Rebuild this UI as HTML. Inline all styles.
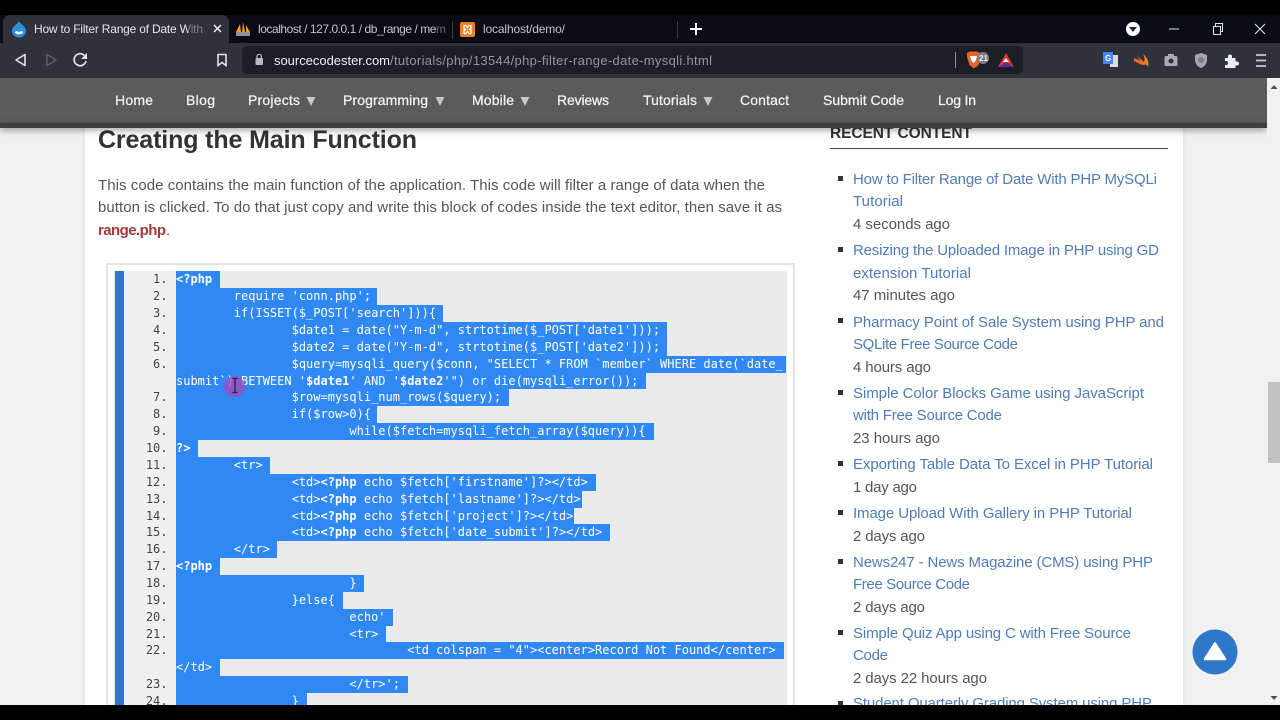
<!DOCTYPE html>
<html><head><meta charset="utf-8"><title>How to Filter Range of Date</title>
<style>
html,body{margin:0;padding:0;width:1280px;height:720px;overflow:hidden;background:#f1f1f1}
body{position:relative}
.l{position:absolute}
svg{position:absolute;left:0;top:0}
svg text{font-family:"Liberation Sans",sans-serif}
.r{position:absolute;left:176px;background:#3088f4;color:#fff;font:12px/17px "DejaVu Sans Mono","Liberation Mono",monospace;white-space:pre;tab-size:8}
.r b{font-weight:bold}
.n{position:absolute;left:124px;width:43.5px;text-align:right;color:#444;font:12px/17px "DejaVu Sans Mono","Liberation Mono",monospace}
.a{fill:#4f7cb6;font-size:15px}
.t{fill:#555;font-size:15px}
.m{fill:#f2f2f2;font-size:14px;stroke:#f2f2f2;stroke-width:.25}
</style></head>
<body>
<div class="l" style="left:85px;top:78px;width:1098px;height:642px;background:#fff;box-shadow:0 0 6px rgba(0,0,0,.08)"></div>
<svg width="1280" height="720" style="z-index:1">
<text x="98" y="148" font-size="25" font-weight="bold" fill="#333" textLength="319">Creating the Main Function</text>
<text x="98" y="190" class="t" textLength="667">This code contains the main function of the application. This code will filter a range of data when the</text>
<text x="98" y="212" class="t" textLength="684">button is clicked. To do that just copy and write this block of codes inside the text editor, then save it as</text>
<text x="98" y="235" font-size="15" font-weight="bold" fill="#a33a3a" textLength="68">range.php</text>
<text x="166" y="235" class="t">.</text>
<text x="830" y="138" font-size="15.5" font-weight="bold" fill="#333" textLength="142">RECENT CONTENT</text>
<rect x="830" y="148" width="338" height="1" fill="#444"/>
<g fill="#333">
<rect x="838" y="176" width="5" height="5"/><rect x="838" y="247" width="5" height="5"/><rect x="838" y="318" width="5" height="5"/><rect x="838" y="390" width="5" height="5"/><rect x="838" y="461" width="5" height="5"/><rect x="838" y="510" width="5" height="5"/><rect x="838" y="559" width="5" height="5"/><rect x="838" y="630" width="5" height="5"/><rect x="838" y="701" width="5" height="4"/>
</g>
<text x="853" y="184" class="a" textLength="304">How to Filter Range of Date With PHP MySQLi</text>
<text x="853" y="206" class="a" textLength="50">Tutorial</text>
<text x="853" y="229" class="t" textLength="97">4 seconds ago</text>
<text x="853" y="255" class="a" textLength="306">Resizing the Uploaded Image in PHP using GD</text>
<text x="853" y="278" class="a" textLength="118">extension Tutorial</text>
<text x="853" y="300" class="t" textLength="102">47 minutes ago</text>
<text x="853" y="327" class="a" textLength="311">Pharmacy Point of Sale System using PHP and</text>
<text x="853" y="349" class="a" textLength="165">SQLite Free Source Code</text>
<text x="853" y="372" class="t" textLength="78">4 hours ago</text>
<text x="853" y="398" class="a" textLength="291">Simple Color Blocks Game using JavaScript</text>
<text x="853" y="420" class="a" textLength="149">with Free Source Code</text>
<text x="853" y="443" class="t" textLength="87">23 hours ago</text>
<text x="853" y="469" class="a" textLength="300">Exporting Table Data To Excel in PHP Tutorial</text>
<text x="853" y="492" class="t" textLength="64">1 day ago</text>
<text x="853" y="518" class="a" textLength="279">Image Upload With Gallery in PHP Tutorial</text>
<text x="853" y="541" class="t" textLength="72">2 days ago</text>
<text x="853" y="567" class="a" textLength="300">News247 - News Magazine (CMS) using PHP</text>
<text x="853" y="589" class="a" textLength="117">Free Source Code</text>
<text x="853" y="612" class="t" textLength="72">2 days ago</text>
<text x="853" y="638" class="a" textLength="278">Simple Quiz App using C with Free Source</text>
<text x="853" y="660" class="a" textLength="35">Code</text>
<text x="853" y="683" class="t" textLength="134">2 days 22 hours ago</text>
<text x="853" y="708" class="a" textLength="299">Student Quarterly Grading System using PHP</text>
</svg>

<div style="position:absolute;left:0;top:0;z-index:2">
<div class="l" style="left:106px;top:263px;width:685px;height:442px;border:2px solid #e4e4e4;border-bottom:0;background:#fff"></div>
<div class="l" style="left:114px;top:271px;width:673px;height:434px;background:#ebebeb"></div>
<div class="l" style="left:124px;top:271px;width:52px;height:434px;background:#f0f0f0"></div>
<div class="l" style="left:115px;top:271px;width:9px;height:434px;background:#2f78c9"></div>

<div class="n" style="top:271px">1.</div>
<div class="n" style="top:288px">2.</div>
<div class="n" style="top:305px">3.</div>
<div class="n" style="top:322px">4.</div>
<div class="n" style="top:339px">5.</div>
<div class="n" style="top:356px">6.</div>
<div class="n" style="top:389px">7.</div>
<div class="n" style="top:406px">8.</div>
<div class="n" style="top:423px">9.</div>
<div class="n" style="top:440px">10.</div>
<div class="n" style="top:457px">11.</div>
<div class="n" style="top:474px">12.</div>
<div class="n" style="top:491px">13.</div>
<div class="n" style="top:508px">14.</div>
<div class="n" style="top:524px">15.</div>
<div class="n" style="top:541px">16.</div>
<div class="n" style="top:558px">17.</div>
<div class="n" style="top:575px">18.</div>
<div class="n" style="top:592px">19.</div>
<div class="n" style="top:609px">20.</div>
<div class="n" style="top:626px">21.</div>
<div class="n" style="top:642px">22.</div>
<div class="n" style="top:676px">23.</div>
<div class="n" style="top:693px">24.</div>

<div class="r" style="top:271px;height:17px;width:43.5px"><b>&lt;?php</b></div>
<div class="r" style="top:288px;height:17px;width:200.5px">	require 'conn.php';</div>
<div class="r" style="top:305px;height:17px;width:266.5px">	if(ISSET($_POST['search'])){</div>
<div class="r" style="top:322px;height:17px;width:490.500px">		$date1 = date("Y-m-d", strtotime($_POST['date1']));</div>
<div class="r" style="top:339px;height:17px;width:490.500px">		$date2 = date("Y-m-d", strtotime($_POST['date2']));</div>
<div class="r" style="top:356px;height:17px;width:610px">		$query=mysqli_query($conn, "SELECT * FROM `member` WHERE date(`date_</div>
<div class="r" style="top:373px;height:16px;width:469.500px">submit`) BETWEEN '<b>$date1</b>' AND '<b>$date2</b>'") or die(mysqli_error());</div>
<div class="r" style="top:389px;height:17px;width:332.500px">		$row=mysqli_num_rows($query);</div>
<div class="r" style="top:406px;height:17px;width:200.500px">		if($row&gt;0){</div>
<div class="r" style="top:423px;height:17px;width:477.500px">			while($fetch=mysqli_fetch_array($query)){</div>
<div class="r" style="top:440px;height:17px;width:22px"><b>?&gt;</b></div>
<div class="r" style="top:457px;height:17px;width:94px">	&lt;tr&gt;</div>
<div class="r" style="top:474px;height:17px;width:419.500px">		&lt;td&gt;<b>&lt;?php</b> echo $fetch['firstname']?&gt;&lt;/td&gt;</div>
<div class="r" style="top:491px;height:17px;width:405.500px">		&lt;td&gt;<b>&lt;?php</b> echo $fetch['lastname']?&gt;&lt;/td&gt;</div>
<div class="r" style="top:508px;height:16px;width:397.500px">		&lt;td&gt;<b>&lt;?php</b> echo $fetch['project']?&gt;&lt;/td&gt;</div>
<div class="r" style="top:524px;height:17px;width:433.500px">		&lt;td&gt;<b>&lt;?php</b> echo $fetch['date_submit']?&gt;&lt;/td&gt;</div>
<div class="r" style="top:541px;height:17px;width:100.500px">	&lt;/tr&gt;</div>
<div class="r" style="top:558px;height:17px;width:43.500px"><b>&lt;?php</b></div>
<div class="r" style="top:575px;height:17px;width:188px">			}</div>
<div class="r" style="top:592px;height:17px;width:166.500px">		}else{</div>
<div class="r" style="top:609px;height:17px;width:216.500px">			echo'</div>
<div class="r" style="top:626px;height:16px;width:210px">			&lt;tr&gt;</div>
<div class="r" style="top:642px;height:17px;width:607.500px">				&lt;td colspan = "4"&gt;&lt;center&gt;Record Not Found&lt;/center&gt;</div>
<div class="r" style="top:659px;height:17px;width:43.500px">&lt;/td&gt;</div>
<div class="r" style="top:676px;height:17px;width:231.500px">			&lt;/tr&gt;';</div>
<div class="r" style="top:693px;height:17px;width:130.500px">		}</div>

<div class="l" style="left:224px;top:376px;width:21px;height:21px;border-radius:50%;background:rgba(170,70,190,.75)"></div>
<svg width="1280" height="720" style="pointer-events:none">
<path d="M232.500 378.500h5M235 378.500v14M232.500 392.500h5" stroke="#222" stroke-width="1.200" fill="none"/>
</svg>
</div>

<div style="position:absolute;left:0;top:0;z-index:3">
<div class="l" style="left:0;top:78px;width:1267px;height:45px;background:#5a5b5a"></div>
<div class="l" style="left:0;top:123px;width:1267px;height:5px;background:#3e3e3e;box-shadow:0 2px 7px rgba(0,0,0,.45)"></div>
<div class="l" style="left:1267px;top:78px;width:13px;height:642px;background:#f1f1f1"></div>
<div class="l" style="left:1268px;top:382px;width:12px;height:81px;background:#c1c1c1"></div>
<div class="l" style="left:0;top:0;width:1280px;height:15px;background:#000"></div>
<div class="l" style="left:0;top:15px;width:1280px;height:28px;background:#0a0b14"></div>
<div class="l" style="left:3px;top:15px;width:226px;height:28px;background:#2f323b;border-radius:7px 7px 0 0"></div>
<div class="l" style="left:0;top:43px;width:1280px;height:35px;background:#2f323b"></div>
<div class="l" style="left:242px;top:46px;width:781px;height:28px;background:#1c1e26;border-radius:5px"></div>
<div class="l" style="left:0;top:705px;width:1280px;height:15px;background:#000"></div>

<svg width="1280" height="720">
<defs><linearGradient id="sw" x1="1" y1="0" x2="0" y2="1"><stop offset="0" stop-color="#f4a62a"/><stop offset="1" stop-color="#e8482a"/></linearGradient></defs>
<!-- tab icons -->
<path d="M19 21c1 3 7 5 7 10a7 6.500 0 0 1-14 0c0-5 6-7 7-10z" fill="#2f8fd8"/>
<path d="M15 32c2-2 3 0 4 0s2-2 4 0c0 3-8 3-8 0z" fill="#fff"/>
<text x="34" y="33" font-size="12" fill="#e6e6e8" textLength="169">How to Filter Range of Date With</text>
<rect x="188" y="18" width="16" height="24" fill="#2f323b" opacity=".55"/>
<path d="M214 25l7 7M221 25l-7 7" stroke="#f0f0f0" stroke-width="1.500"/>
<path d="M236 32l4-8 1 8zM242 32l1-10 2 10zM246 32l0-7 4 7z" fill="#ee9a2c"/>
<rect x="236" y="32" width="14" height="4" fill="#8f92a0"/>
<text x="258" y="33" font-size="12" fill="#c4c5c9" textLength="188">localhost / 127.0.0.1 / db_range / mem</text>
<rect x="436" y="18" width="14" height="24" fill="#0a0b14" opacity=".5"/>
<rect x="452" y="21" width="1" height="18" fill="#3a3c44"/>
<rect x="460" y="22" width="15" height="15" rx="2" fill="#ef7f22"/>
<path d="M464 25.500h2l1.500 2 1.500-2h2v3l-1.500 1 1.500 1v3h-2l-1.500-2-1.500 2h-2v-3l1.500-1-1.500-1z" fill="none" stroke="#fff" stroke-width="1.300"/>
<text x="483" y="33" font-size="12" fill="#c4c5c9" textLength="82">localhost/demo/</text>
<rect x="677" y="21" width="1" height="18" fill="#3a3c44"/>
<path d="M696 23v12M690 29h12" stroke="#fff" stroke-width="2"/>
<circle cx="1133" cy="29" r="7" fill="#fff"/>
<path d="M1129 27h8l-4 5z" fill="#23252d"/>
<path d="M1169 29h10" stroke="#e6e6e6" stroke-width="1"/>
<rect x="1213.500" y="26.500" width="7" height="8" fill="none" stroke="#e6e6e6"/>
<path d="M1215.500 26v-2.500h7v8h-2" fill="none" stroke="#e6e6e6"/>
<path d="M1255 24l10 10M1265 24l-10 10" stroke="#e6e6e6" stroke-width="1"/>
<!-- toolbar -->
<path d="M25 54.500v11l-9-5.500z" fill="none" stroke="#e2e3e6" stroke-width="1.600" stroke-linejoin="round"/>
<path d="M47 54.500v11l9-5.500z" fill="none" stroke="#5b5e68" stroke-width="1.600" stroke-linejoin="round"/>
<path d="M85.500 57a6 6 0 1 0 .5 4" fill="none" stroke="#e2e3e6" stroke-width="1.700"/>
<path d="M87 53v6h-6z" fill="#e2e3e6"/>
<path d="M218 54.500h8v11l-4-3-4 3z" fill="none" stroke="#e2e3e6" stroke-width="1.600"/>
<rect x="255.500" y="58" width="7.500" height="7" rx="1" fill="#b8bac0"/>
<path d="M257 58v-1.500a2.200 2.200 0 0 1 4.400 0V58" fill="none" stroke="#b8bac0" stroke-width="1.200"/>
<text x="274" y="65" font-size="13" fill="#f0f0f2" textLength="116">sourcecodester.com</text>
<text x="390" y="65" font-size="13" fill="#92959e" textLength="322">/tutorials/php/13544/php-filter-range-date-mysqli.html</text>
<rect x="955" y="52" width="1" height="16" fill="#8c8e94"/>
<path d="M967 53l3-1.500h7l3 1.500 1 4-2.500 8-4.500 3.500-4.500-3.500-2.500-8z" fill="#e8622a"/>
<path d="M970 56h7l-1.500 5-2 2-2-2z" fill="#fff"/>
<circle cx="983" cy="58" r="6" fill="#7a7d85"/>
<text x="979" y="61" font-size="8" font-weight="bold" fill="#e8e8e8">21</text>
<path d="M1006 53l8 14h-16z" fill="#e0392f"/>
<path d="M1006 62l8 5h-16z" fill="#5c2d91"/>
<path d="M1006 58l3 4h-6z" fill="#fff"/>
<!-- extensions -->
<rect x="1110" y="55" width="8" height="12" fill="#d9dde2"/>
<rect x="1103" y="52" width="10" height="12" rx="1" fill="#4285f4"/>
<text x="1105" y="61" font-size="8" font-weight="bold" fill="#fff">G</text>
<path d="M1134 61C1138 63 1141 65 1143 65C1145 64 1147 65 1148 67C1149 63 1148 58 1143 54C1145 57 1145 60 1144 62C1142 60 1139 58 1137 56C1138 58 1140 60 1141 61C1139 60 1136 59 1134 58z" fill="url(#sw)"/>
<rect x="1164.500" y="56" width="13" height="10" rx="1.500" fill="#a9abb0"/>
<rect x="1168" y="54" width="6" height="3" fill="#a9abb0"/>
<circle cx="1171" cy="61" r="2.500" fill="#2f323b"/>
<path d="M1201 53l6 2v5c0 4-3 7-6 8-3-1-6-4-6-8v-5z" fill="#a3a6ae"/>
<circle cx="1201" cy="60" r="3" fill="#7c7f88"/>
<path d="M1225 58h3v-1.500a2 2 0 0 1 4 0V58h3.500v3.500h1.500a2 2 0 0 1 0 4h-1.500V68h-10.500v-3h1a2 2 0 0 0 0-4h-1z" fill="#ececee"/>
<path d="M1256 55h10M1256 60.500h10M1256 66h10" stroke="#c8cacf" stroke-width="1.700"/>
<!-- nav -->
<text x="115" y="105" class="m" textLength="38">Home</text>
<text x="186" y="105" class="m" textLength="29">Blog</text>
<text x="248" y="105" class="m" textLength="52">Projects</text>
<text x="343" y="105" class="m" textLength="85">Programming</text>
<text x="472" y="105" class="m" textLength="42">Mobile</text>
<text x="557" y="105" class="m" textLength="52">Reviews</text>
<text x="643" y="105" class="m" textLength="54">Tutorials</text>
<text x="740" y="105" class="m" textLength="49">Contact</text>
<text x="823" y="105" class="m" textLength="81">Submit Code</text>
<text x="938" y="105" class="m" textLength="38">Log In</text>
<g fill="#c8c8c8">
<path d="M306.500 97h9l-4.500 9z"/><path d="M435.500 97h9l-4.500 9z"/><path d="M520.500 97h9l-4.500 9z"/><path d="M703.500 97h9l-4.500 9z"/>
</g>
<!-- scrollbar arrows -->
<path d="M1270.500 89l3.500-4 3.500 4z" fill="#505050"/>
<path d="M1270.500 696l3.500 4 3.500-4z" fill="#505050"/>
<!-- back to top -->
<circle cx="1215" cy="652" r="22.500" fill="#2f78c9"/>
<path d="M1215 643.500l10 15.500h-20z" fill="#fff" stroke="#fff" stroke-width="2.500" stroke-linejoin="round"/>
</svg>
</div>
</body></html>
